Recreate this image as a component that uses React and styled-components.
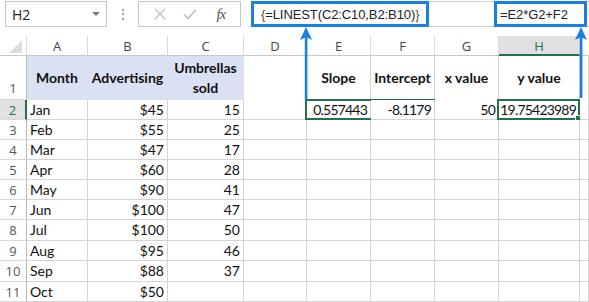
import React from "react"
import styled, {createGlobalStyle} from "styled-components"

const GREEN = "#217346"
const BLUE = "#1a7fe3"
const GRID = "#d4d4d4"

const Global = createGlobalStyle`
  html, body { margin: 0; padding: 0; background: #ffffff; }
  body { width: 589px; height: 302px; overflow: hidden; }
`

const Page = styled.div`
  position: relative;
  width: 589px;
  height: 302px;
  overflow: hidden;
  font-family: "Lato", "Liberation Sans", sans-serif;
`

const Toolbar = styled.div`
  display: flex;
  align-items: stretch;
  height: 27px;
  padding-left: 5px;
  font-family: "Open Sans", "Liberation Sans", sans-serif;
`

const NameBox = styled.div`
  box-sizing: border-box;
  width: 102px;
  margin-top: 1px;
  border: 1px solid #c6c6c6;
  display: flex;
  align-items: center;
  justify-content: space-between;
  padding: 0 6px 0 6px;
  font-size: 14px;
  color: #222;
`

const DropArrow = styled.span`
  width: 0;
  height: 0;
  border-left: 4px solid transparent;
  border-right: 4px solid transparent;
  border-top: 4px solid #777;
`

const Dots = styled.div`
  width: 31px;
  display: flex;
  align-items: center;
  justify-content: center;
  color: #a8a8a8;
  font-size: 14px;
  font-weight: 700;
`

const ButtonBox = styled.div`
  box-sizing: border-box;
  width: 103px;
  margin-top: 1px;
  border: 1px solid #c6c6c6;
  display: flex;
  align-items: center;
  justify-content: space-around;
  padding: 0 4px 0 6px;
`

const IconSlot = styled.span`
  display: flex;
  align-items: center;
  justify-content: center;
  width: 24px;
  color: ${props => props.color || "#bdbdbd"};
`

const Fx = styled.span`
  font-family: "Liberation Serif", serif;
  font-style: italic;
  font-size: 15px;
  color: #555;
  letter-spacing: -1px;
`

const FormulaBar = styled.div`
  box-sizing: border-box;
  flex: 1;
  margin-left: 10px;
  margin-top: 1px;
  border-top: 1px solid #d0d0d0;
  border-bottom: 1px solid #d0d0d0;
  display: flex;
  align-items: stretch;
`

const Highlight = styled.div`
  box-sizing: border-box;
  width: ${props => props.width};
  margin-left: ${props => props.left || "0"};
  margin-top: -1px;
  margin-bottom: -1px;
  border: 3px solid ${BLUE};
  display: flex;
  align-items: center;
  padding-left: ${props => props.pad || "6px"};
  font-family: "Liberation Sans", sans-serif;
  font-size: 13px;
  letter-spacing: -0.1px;
  color: #222;
  white-space: nowrap;
`

const Brace = styled.span`
  color: #6b4a2e;
`

const Sheet = styled.div`
  margin-top: 9px;
  display: grid;
  grid-template-columns: 27px 61px 80px 76px 63px 64px 64px 64px 81px 1fr;
  grid-template-rows: 20px 44px 20px 20px 20px 20px 20px 20px 21px 20px 21px 20px;
`

const ColHead = styled.div`
  box-sizing: border-box;
  position: relative;
  display: flex;
  align-items: center;
  justify-content: center;
  font-family: "Open Sans", "Liberation Sans", sans-serif;
  font-size: 13px;
  color: ${props => props.active ? GREEN : "#444"};
  background: ${props => props.active ? "#e1e1e1" : "#ffffff"};
  border-right: 1px solid ${props => props.last ? "transparent" : "#dadada"};
  border-bottom: ${props => props.active ? `2px solid ${GREEN}` : "1px solid #c8c8c8"};
  padding-top: 1px;
`

const Corner = styled.div`
  position: absolute;
  right: 4px;
  bottom: 2px;
  width: 0;
  height: 0;
  border-left: 13px solid transparent;
  border-bottom: 13px solid #dcdcdc;
`

const RowHead = styled.div`
  box-sizing: border-box;
  display: flex;
  align-items: ${props => props.tall ? "flex-end" : "center"};
  justify-content: center;
  padding-bottom: ${props => props.tall ? "2px" : "0"};
  font-family: "Open Sans", "Liberation Sans", sans-serif;
  font-size: 13px;
  color: ${props => props.active ? GREEN : "#555"};
  background: ${props => props.active ? "#e1e1e1" : "#ffffff"};
  border-right: ${props => props.active ? `2px solid ${GREEN}` : "1px solid #b8b8b8"};
  border-bottom: 1px solid #dadada;
`

const Cell = styled.div`
  box-sizing: border-box;
  position: relative;
  display: flex;
  align-items: center;
  justify-content: ${props => props.align === "right" ? "flex-end" : props.align === "center" ? "center" : "flex-start"};
  text-align: center;
  padding: 0 3px 0 3px;
  font-size: 14px;
  line-height: 20px;
  letter-spacing: ${props => props.num ? "-0.8px" : "0"};
  font-weight: ${props => props.bold ? 700 : 400};
  color: #111;
  white-space: pre;
  background: ${props => props.fill || "#ffffff"};
  border-right: 1px solid ${props => props.fill || GRID};
  border-bottom: 1px solid ${props => props.fill || (props.noBottom ? "#ffffff" : GRID)};
`

const Selection = styled.div`
  position: absolute;
  left: -2px;
  top: -1px;
  right: ${props => props.right || "-1px"};
  bottom: -1px;
  border: 2px solid ${GREEN};
  pointer-events: none;
`

const Handle = styled.div`
  position: absolute;
  right: -4px;
  bottom: -4px;
  width: 5px;
  height: 5px;
  background: ${GREEN};
  border: 1px solid #ffffff;
`

const Arrow = styled.svg`
  position: absolute;
  left: ${props => props.x}px;
  top: ${props => props.y}px;
`

const columns = ["A", "B", "C", "D", "E", "F", "G", "H", ""]

const rows = [
    ["Jan", "$45", "15", "", "0.557443", "-8.1179", "50", "19.75423989"],
    ["Feb", "$55", "25"],
    ["Mar", "$47", "17"],
    ["Apr", "$60", "28"],
    ["May", "$90", "41"],
    ["Jun", "$100", "47"],
    ["Jul", "$100", "50"],
    ["Aug", "$95", "46"],
    ["Sep", "$88", "37"],
    ["Oct", "$50", ""],
]

const headers = ["Month", "Advertising", "Umbrellas\nsold", "", "Slope", "Intercept", "x value", "y value", ""]

const UpArrow = ({x, y, height}) => (
    <Arrow x={x - 7} y={y} width="14" height={height} viewBox={`0 0 14 ${height}`}>
        <rect x="5.8" y="10" width="2.6" height={height - 10} fill={BLUE}/>
        <path d="M7 0 L13 13 L7 10 L1 13 Z" fill={BLUE}/>
    </Arrow>
)

const App = () => {
    return (
        <Page>
            <Global/>
            <Toolbar>
                <NameBox>
                    <span>H2</span>
                    <DropArrow/>
                </NameBox>
                <Dots>⋮</Dots>
                <ButtonBox>
                    <IconSlot>
                        <svg width="12" height="12" viewBox="0 0 12 12">
                            <path d="M1 1 L11 11 M11 1 L1 11" stroke="#c0c0c0" strokeWidth="1.4"/>
                        </svg>
                    </IconSlot>
                    <IconSlot>
                        <svg width="14" height="12" viewBox="0 0 14 12">
                            <path d="M1 6.5 L5 10.5 L13 1.5" stroke="#c0c0c0" strokeWidth="1.6" fill="none"/>
                        </svg>
                    </IconSlot>
                    <IconSlot color="#555">
                        <Fx>fx</Fx>
                    </IconSlot>
                </ButtonBox>
                <FormulaBar>
                    <Highlight width="178px" pad="7px">
                        <Brace>{"{"}</Brace>=LINEST(C2:C10,B2:B10)<Brace>{"}"}</Brace>
                    </Highlight>
                    <Highlight width="93px" left="65px" pad="3px">=E2*G2+F2</Highlight>
                </FormulaBar>
            </Toolbar>

            <Sheet>
                <ColHead><Corner/></ColHead>
                {columns.map((c, i) => (
                    <ColHead key={c + i} active={c === "H"} last={i === columns.length - 1}>{c}</ColHead>
                ))}

                <RowHead tall>1</RowHead>
                {headers.map((h, i) => (
                    <Cell key={"h" + i} bold align="center" fill={i < 3 ? "#d9e1f2" : undefined} noBottom={i >= 3}>{h}</Cell>
                ))}

                {rows.map((r, ri) => {
                    const n = ri + 2
                    return (
                        <React.Fragment key={n}>
                            <RowHead active={n === 2}>{n}</RowHead>
                            {Array.from({length: 9}).map((_, ci) => {
                                const v = r[ci] || ""
                                const align = ci === 0 ? "left" : "right"
                                return (
                                    <Cell key={ci} align={align} num={ci >= 4}>
                                        {v}
                                        {n === 2 && ci === 4 && <Selection right="-65px"/>}
                                        {n === 2 && ci === 7 && <Selection><Handle/></Selection>}
                                    </Cell>
                                )
                            })}
                        </React.Fragment>
                    )
                })}
            </Sheet>

            <UpArrow x={306} y={27} height={73}/>
            <UpArrow x={581} y={27} height={71}/>
        </Page>
    )
}

export default App
